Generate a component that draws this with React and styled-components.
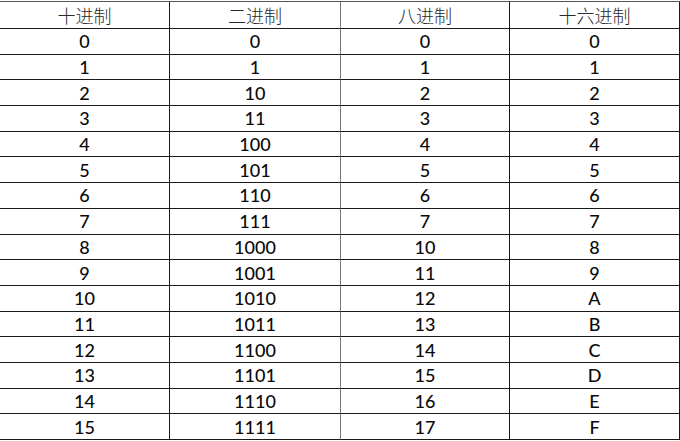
import React from 'react';
import styled, { createGlobalStyle } from 'styled-components';

const GlobalStyle = createGlobalStyle`
body {
  margin: 0;
  background: #ffffff;
}
`;

const Table = styled.div`
display: grid;
grid-template-columns: 170px 171px 169px 170px;
margin-top: 1px;
border-top: 1px solid #555;
width: 680px;
`;

const Cell = styled.div`
box-sizing: border-box;
height: ${props => props.$head ? '27px' : '25.7px'};
border-right: 1px solid ${props => props.$col === 1 ? '#777' : '#1a1a1a'};
border-bottom: 1px solid #1a1a1a;
display: flex;
align-items: center;
justify-content: center;
font-family: ${props => props.$head
  ? '"Noto Sans CJK SC", "Noto Sans", sans-serif'
  : 'Lato, "Open Sans", sans-serif'};
font-size: ${props => props.$head ? '18px' : '18px'};
font-weight: ${props => props.$head ? 300 : 500};
color: ${props => props.$head ? '#2a2a2a' : '#0a0a0a'};
line-height: 1;
`;

const headers = ['十进制', '二进制', '八进制', '十六进制'];

const rows = Array.from({ length: 16 }, (_, n) => [
  String(n),
  n.toString(2),
  n.toString(8),
  n.toString(16).toUpperCase(),
]);

const App = () => {
  return (
    <>
      <GlobalStyle />
      <Table>
        {headers.map((h, i) => (
          <Cell key={h} $head $col={i}>{h}</Cell>
        ))}
        {rows.map((row, r) =>
          row.map((v, i) => (
            <Cell key={r + '-' + i} $col={i}>{v}</Cell>
          ))
        )}
      </Table>
    </>
  );
};

export default App;
